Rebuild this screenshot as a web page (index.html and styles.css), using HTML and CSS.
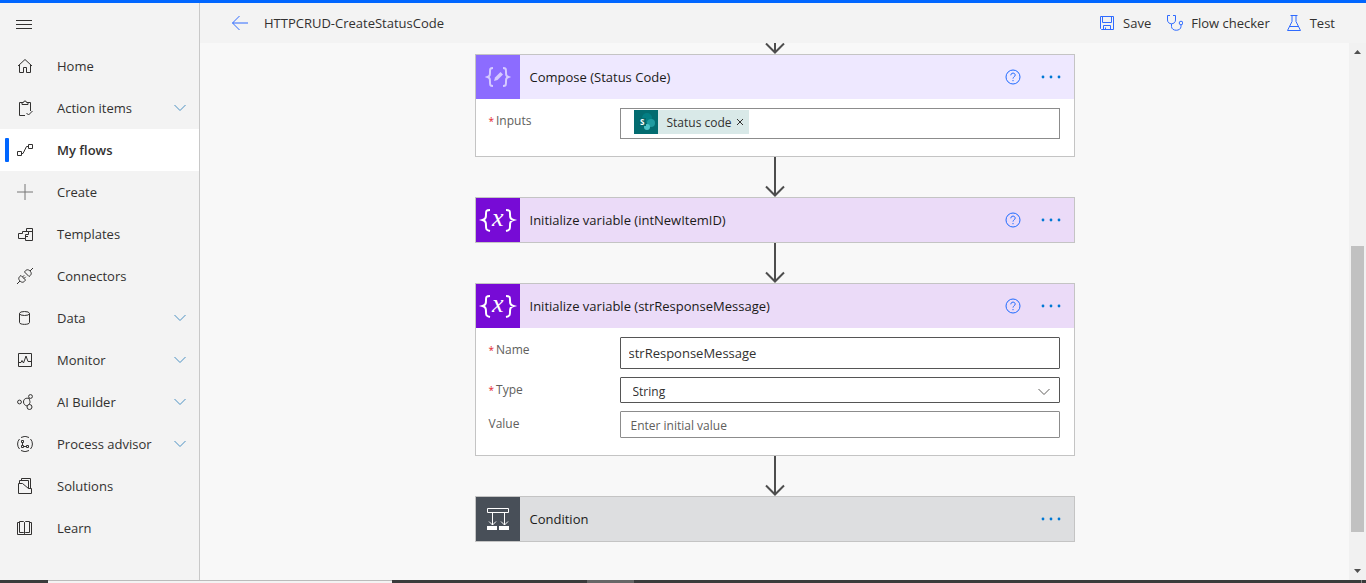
FILE: index.html
```html
<!DOCTYPE html>
<html lang="en">
<head>
    <meta charset="UTF-8">
    <meta name="viewport" content="width=device-width, initial-scale=1.0">
    <title>HTTPCRUD-CreateStatusCode</title>
    <link rel="stylesheet" href="styles.css">
</head>
<body>
    <svg class="defs" aria-hidden="true">
        <symbol id="chevron" viewBox="0 0 12 8"><path d="M.5 1 6 6.500 11.500 1"/></symbol>
        <symbol id="help" viewBox="0 0 16 16"><circle cx="8" cy="8" r="7"/><path d="M5.800 6.300c0-3 4.400-2.800 4.400-.2 0 1.700-2.200 1.700-2.200 3.500M8 11v1.200"/></symbol>
        <symbol id="dots" viewBox="0 0 22 4"><circle cx="3" cy="2" r="1.400"/><circle cx="11" cy="2" r="1.400"/><circle cx="19" cy="2" r="1.400"/></symbol>
        <symbol id="arrow" viewBox="0 0 20 40"><path d="M10 0v38M1 29.500l9 9 9-9"/></symbol>
    </svg>

    <div class="accent"></div>
    <div class="app">
        <nav class="sidebar">
            <button class="nav-item menu" aria-label="Menu">
                <svg class="icon" viewBox="0 0 16 16"><path d="M0 4.500h16M0 8.500h16M0 12.500h16"/></svg>
            </button>
            <a href="#" class="nav-item">
                <svg class="icon" viewBox="0 0 16 16"><path d="M1 8 8 1.500 15 8M2.500 7v7.500h4v-5h3v5h4V7"/></svg>
                <span>Home</span>
            </a>
            <a href="#" class="nav-item">
                <svg class="icon" viewBox="0 0 16 16"><path d="M8 15.500H2.500v-13H5M11 2.500h2.500V11M5 4.500v-2h1.500a1.500 1.500 0 0 1 3 0H11v2zM9.500 13l2 2 4-4"/></svg>
                <span>Action items</span>
                <svg class="chevron"><use href="#chevron"/></svg>
            </a>
            <a href="#" class="nav-item active">
                <svg class="icon" viewBox="0 0 16 16"><path d="M.5 9.500h4v4h-4zM11.500 2.500h4v4h-4zM4.500 11.500H6l3.500-7h2"/></svg>
                <span>My flows</span>
            </a>
            <a href="#" class="nav-item">
                <svg class="icon thin" viewBox="0 0 16 16"><path d="M8 0v16M0 8h16"/></svg>
                <span>Create</span>
            </a>
            <a href="#" class="nav-item">
                <svg class="icon" viewBox="0 0 16 16"><path d="M9.500 5.500v-3h6v12h-7v-2h-7v-5h4v-2h6v3h-3v4M8.500 10.500H11M15.500 5.500h-4"/></svg>
                <span>Templates</span>
            </a>
            <a href="#" class="nav-item">
                <svg class="icon" viewBox="0 0 16 16"><path d="M0 16l3-3M13 3l3-3M3 13c-2-2-1.500-4 1-5.500L8.500 12C7 14.500 5 15 3 13zM7.500 4 12 8.500c2.500-1.500 3-3.500 1-5.500s-4-1.500-5.500 1zM5.500 9l1.700-1.700M7 10.500l1.700-1.700"/></svg>
                <span>Connectors</span>
            </a>
            <a href="#" class="nav-item">
                <svg class="icon" viewBox="0 0 16 16"><ellipse cx="7.500" cy="3.500" rx="5" ry="2"/><path d="M2.500 3.500v9c0 2.500 10 2.500 10 0v-9"/></svg>
                <span>Data</span>
                <svg class="chevron"><use href="#chevron"/></svg>
            </a>
            <a href="#" class="nav-item">
                <svg class="icon" viewBox="0 0 16 16"><path d="M1.500 1.500h13v13h-13zM1.500 10.500H4l1-2 1.500 2.500 2.500-7 2 5.500h3.500"/></svg>
                <span>Monitor</span>
                <svg class="chevron"><use href="#chevron"/></svg>
            </a>
            <a href="#" class="nav-item">
                <svg class="icon" viewBox="0 0 16 16"><circle cx="2.500" cy="8" r="1.900"/><circle cx="13.500" cy="2.500" r="1.900"/><circle cx="12.500" cy="13" r="2.500"/><path d="M12 4.500C9 3.500 6.500 5 6.500 8c0 2 1.500 3.500 3.500 4M12.500 4.500c-.5 2 2 4-1 6"/></svg>
                <span>AI Builder</span>
                <svg class="chevron"><use href="#chevron"/></svg>
            </a>
            <a href="#" class="nav-item">
                <svg class="icon" viewBox="0 0 16 16"><path d="M4 1.500a7.500 7.500 0 0 1 8 0M13.500 3a7.500 7.500 0 0 1 0 10M12 14.500a7.500 7.500 0 0 1-8 0M2.500 13a7.500 7.500 0 0 1 0-10M4.500 4.500h2v2h-2zM4.500 9.500h2v2h-2zM9.500 9.500h2v2h-2zM5.500 6.500v3M6.500 10.500h3"/></svg>
                <span>Process advisor</span>
                <svg class="chevron"><use href="#chevron"/></svg>
            </a>
            <a href="#" class="nav-item">
                <svg class="icon" viewBox="0 0 16 16"><path d="M1.500 15.500v-10h4l6 5h3v5zM2.500 5.500v-3h9v8M4.500 2.500v-2h9v10"/></svg>
                <span>Solutions</span>
            </a>
            <a href="#" class="nav-item">
                <svg class="icon" viewBox="0 0 16 16"><path d="M2.500 1.500h4l1 1 1-1h4v11h-4l-1 1-1-1h-4zM7.500 2.500v11M2.500 2.500h-2v12h14v-12h-2"/></svg>
                <span>Learn</span>
            </a>
        </nav>

        <main class="main">
            <header class="toolbar">
                <button class="back" aria-label="Back">
                    <svg class="icon" viewBox="0 0 16 16"><path d="M7.500 1 .5 8l7 7M.5 8H16"/></svg>
                </button>
                <h1>HTTPCRUD-CreateStatusCode</h1>
                <button class="command">
                    <svg class="icon" viewBox="0 0 16 16"><path d="M1.500 1.500h13v13h-12l-1-1zM3.500 1.500v6h9v-6M4.500 14.500v-4h7v4M6.500 14.500v-2"/></svg>
                    <span>Save</span>
                </button>
                <button class="command">
                    <svg class="icon" viewBox="0 0 16 16"><path d="M3 .5H.5V5C.5 10 8.500 10 8.500 5V.5H6M4.500 9v2.500c0 5 9.500 5 9.500 0V10"/><circle cx="14" cy="8" r="1.800"/></svg>
                    <span>Flow checker</span>
                </button>
                <button class="command">
                    <svg class="icon" viewBox="0 0 16 16"><path d="M4.500.5h7M6 .5v6l-4.500 9h13L10 6.500v-6M3.500 11.500h9"/></svg>
                    <span>Test</span>
                </button>
            </header>

            <div class="workspace">
                <div class="flow">
                    <div class="connector cut"><svg><use href="#arrow"/></svg></div>

                    <section class="card compose">
                        <div class="card-header">
                            <span class="card-icon">
                                <svg viewBox="0 0 44 44">
                                    <path class="soft" d="M17 13c-3 0-3 1-3 4s0 4-2.500 5c2.500 1 2.500 2 2.500 5s0 4 3 4M27 13c3 0 3 1 3 4s0 4 2.500 5c-2.500 1-2.500 2-2.500 5s0 4-3 4"/>
                                    <path class="pencil" d="M18 26l1-3.500 5.500-5.500 2.500 2.500-5.500 5.500z"/>
                                </svg>
                            </span>
                            <h2>Compose (Status Code)</h2>
                            <button class="help" aria-label="Help"><svg><use href="#help"/></svg></button>
                            <button class="more" aria-label="More"><svg><use href="#dots"/></svg></button>
                        </div>
                        <div class="card-body">
                            <label for="inputs"><span class="required">*</span>Inputs</label>
                            <div class="token-field">
                                <span class="token">
                                    <svg viewBox="0 0 24 24">
                                        <circle cx="13" cy="8" r="5" fill="#037e83"/>
                                        <circle cx="17" cy="13" r="4" fill="#1f9ba0"/>
                                        <circle cx="13" cy="17" r="3" fill="#4cc4c9"/>
                                        <path d="M5 8h7v8H5z" fill="#03686c"/>
                                        <text x="6" y="15" class="sp-letter">S</text>
                                    </svg>
                                    <span>Status code</span>
                                    <button aria-label="Remove"><svg viewBox="0 0 8 8"><path d="M1 1l6 6M7 1 1 7"/></svg></button>
                                </span>
                                <input type="text" id="inputs">
                            </div>
                        </div>
                    </section>

                    <div class="connector"><svg><use href="#arrow"/></svg></div>

                    <section class="card variable">
                        <div class="card-header">
                            <span class="card-icon">
                                <svg viewBox="0 0 44 44">
                                    <path class="curly" d="M14 12c-4 0-4 1-4 4s0 5-3.500 6c3.500 1 3.500 3 3.500 6s0 4 4 5M30 12c4 0 4 1 4 4s0 5 3.500 6c-3.500 1-3.500 3-3.500 6s0 4-4 5"/>
                                    <text x="16" y="28" class="var-x">x</text>
                                </svg>
                            </span>
                            <h2>Initialize variable (intNewItemID)</h2>
                            <button class="help" aria-label="Help"><svg><use href="#help"/></svg></button>
                            <button class="more" aria-label="More"><svg><use href="#dots"/></svg></button>
                        </div>
                    </section>

                    <div class="connector"><svg><use href="#arrow"/></svg></div>

                    <section class="card variable">
                        <div class="card-header">
                            <span class="card-icon">
                                <svg viewBox="0 0 44 44">
                                    <path class="curly" d="M14 12c-4 0-4 1-4 4s0 5-3.500 6c3.500 1 3.500 3 3.500 6s0 4 4 5M30 12c4 0 4 1 4 4s0 5 3.500 6c-3.500 1-3.500 3-3.500 6s0 4-4 5"/>
                                    <text x="16" y="28" class="var-x">x</text>
                                </svg>
                            </span>
                            <h2>Initialize variable (strResponseMessage)</h2>
                            <button class="help" aria-label="Help"><svg><use href="#help"/></svg></button>
                            <button class="more" aria-label="More"><svg><use href="#dots"/></svg></button>
                        </div>
                        <div class="card-body">
                            <label for="name"><span class="required">*</span>Name</label>
                            <input type="text" id="name" class="name-input" value="strResponseMessage">
                            <label for="type"><span class="required">*</span>Type</label>
                            <div class="select">
                                <select id="type">
                                    <option>String</option>
                                </select>
                                <svg><use href="#chevron"/></svg>
                            </div>
                            <label for="value">Value</label>
                            <input type="text" id="value" class="value-input" placeholder="Enter initial value">
                        </div>
                    </section>

                    <div class="connector"><svg><use href="#arrow"/></svg></div>

                    <section class="card condition">
                        <div class="card-header">
                            <span class="card-icon">
                                <svg viewBox="0 0 44 44">
                                    <path class="line" d="M11.500 11.500h21v4h-21zM16.500 16v12M28.500 16v12M13 24.500l3.500 3.500 3.500-3.500M25 24.500l3.500 3.500 3.500-3.500"/>
                                    <path class="boxes" d="M11 29h10v4H11zM23 29h10v4H23z"/>
                                </svg>
                            </span>
                            <h2>Condition</h2>
                            <button class="more" aria-label="More"><svg><use href="#dots"/></svg></button>
                        </div>
                    </section>
                </div>

                <div class="scrollbar">
                    <svg viewBox="0 0 7 4"><path d="M0 4 3.500 0 7 4z"/></svg>
                    <div class="track"><div class="thumb"></div></div>
                    <svg viewBox="0 0 7 4"><path d="M0 0l3.500 4L7 0z"/></svg>
                </div>
            </div>
        </main>
    </div>
    <div class="taskbar">
        <div class="start"></div>
        <div class="search"></div>
        <div class="pinned"></div>
        <div class="running"></div>
        <div class="tray"></div>
    </div>
</body>
</html>
```
FILE: styles.css
```css
* {
    box-sizing: border-box;
}

body {
    margin: 0;
    height: 100vh;
    display: flex;
    flex-direction: column;
    overflow: hidden;
    font-family: "Segoe UI", "Open Sans", "Noto Sans", sans-serif;
    font-size: 13px;
    color: #323130;
    background: #f8f8f8;
}

h1, h2 {
    margin: 0;
    font-size: 13px;
    font-weight: normal;
}

button {
    padding: 0;
    border: none;
    background: none;
    font: inherit;
    color: inherit;
    cursor: pointer;
}

input, select {
    font-family: inherit;
    color: #323130;
}

svg {
    display: block;
    fill: none;
    stroke: currentColor;
}

.defs {
    position: absolute;
    width: 0;
    height: 0;
}

.icon {
    width: 16px;
    height: 16px;
    flex: none;
}

.accent {
    height: 3px;
    flex: none;
    background: #0066ff;
}

.app {
    flex: 1;
    min-height: 0;
    display: flex;
}

/* sidebar */
.sidebar {
    width: 200px;
    flex: none;
    background: #f3f3f3;
    border-right: 1px solid #c8c8c8;
}

.nav-item {
    position: relative;
    display: flex;
    align-items: center;
    width: 100%;
    height: 42px;
    padding: 0 13px 0 17px;
    color: #323130;
    text-decoration: none;
}

.nav-item.menu {
    padding-left: 16px;
}

.nav-item span {
    flex: 1;
    margin-left: 24px;
    white-space: nowrap;
}

.nav-item.active {
    background: #fff;
    font-weight: 600;
}

.nav-item.active::before {
    content: "";
    position: absolute;
    left: 5px;
    top: 9px;
    width: 4px;
    height: 24px;
    border-radius: 1px;
    background: #0066ff;
}

.thin {
    color: #777;
}

.chevron {
    width: 12px;
    height: 8px;
    flex: none;
    color: #4a90c2;
}

/* top bar */
.main {
    flex: 1;
    min-width: 0;
    display: flex;
    flex-direction: column;
}

.toolbar {
    display: flex;
    align-items: center;
    gap: 16px;
    height: 40px;
    flex: none;
    padding: 0 31px 0 32px;
    background: #f3f3f3;
}

.toolbar h1 {
    flex: 1;
}

.toolbar .icon {
    color: #2f6bff;
}

.command {
    display: flex;
    align-items: center;
    gap: 8px;
}

/* canvas */
.workspace {
    flex: 1;
    min-height: 0;
    display: flex;
}

.flow {
    flex: 1;
    display: flex;
    flex-direction: column;
    align-items: center;
    overflow: hidden;
}

.connector {
    height: 40px;
    flex: none;
    display: flex;
    align-items: flex-end;
    overflow: hidden;
    color: #4d4d4d;
}

.connector.cut {
    height: 11px;
}

.connector svg {
    width: 20px;
    height: 40px;
    flex: none;
    stroke-width: 2;
}

.card {
    width: 600px;
    max-width: 100%;
    flex: none;
    background: #fff;
    border: 1px solid #c4c4c4;
}

.card-header {
    display: flex;
    align-items: center;
    height: 44px;
    padding-right: 12px;
}

.card-header h2 {
    flex: 1;
    padding-left: 10px;
    color: #1b1a19;
}

.card-icon svg {
    width: 44px;
    height: 44px;
}

.compose .card-header {
    background: #eee8ff;
}

.compose .card-icon {
    background: #8c6cff;
}

.variable .card-header {
    background: #ebdbf8;
}

.variable .card-icon {
    background: #770bd6;
}

.condition .card-header {
    background: #dddee0;
}

.condition .card-icon {
    background: #484f58;
}

.soft {
    stroke: #d6caff;
    stroke-width: 2;
}

.pencil {
    fill: #d6caff;
    stroke: none;
}

.line {
    stroke: #fff;
}

.boxes {
    fill: #fff;
    stroke: none;
}

.curly {
    stroke: #fff;
    stroke-width: 2;
}

.var-x {
    fill: #fff;
    stroke: none;
    font-family: "Liberation Serif", serif;
    font-style: italic;
    font-size: 26px;
}

.help {
    margin-right: 19px;
    color: #1f6bff;
}

.help svg {
    width: 16px;
    height: 16px;
}

.more svg {
    width: 22px;
    height: 4px;
    fill: #0078d4;
    stroke: none;
}

.card-body {
    display: grid;
    grid-template-columns: 131px 1fr;
    row-gap: 8px;
    align-items: start;
    padding: 9px 14px 17px 13px;
    font-size: 12px;
}

.card-body label {
    height: 25px;
    line-height: 25px;
    color: #605e5c;
}

.required {
    margin-right: 2px;
    font-size: 10px;
    color: #e3242b;
}

.token-field {
    display: flex;
    align-items: flex-start;
    height: 31px;
    padding: 1px 0 0 13px;
    border: 1px solid #8c8c8c;
}

.token-field input {
    flex: 1;
    min-width: 0;
    height: 24px;
    border: none;
    outline: none;
    background: none;
}

.token {
    display: flex;
    align-items: center;
    height: 24px;
    padding-right: 5px;
    background: #d9e9e8;
    white-space: nowrap;
}

.token > svg {
    width: 24px;
    height: 24px;
    margin-right: 9px;
    background: #036c70;
    stroke: none;
}

.sp-letter {
    fill: #fff;
    font-size: 8px;
    font-weight: bold;
}

.token button {
    margin-left: 4px;
}

.token button svg {
    width: 8px;
    height: 8px;
}

.name-input, .value-input, .select select {
    width: 100%;
    border: 1px solid #555;
    border-radius: 1px;
    background: #fff;
}

.name-input {
    height: 32px;
    padding: 0 8px;
    font-size: 13px;
}

.value-input {
    height: 27px;
    padding: 1px 10px 0;
    border-color: #8c8c8c;
    font-size: 12px;
}

.value-input::placeholder {
    color: #605e5c;
}

.select {
    position: relative;
}

.select select {
    display: block;
    appearance: none;
    height: 26px;
    padding: 2px 12px 0;
    font-size: 12px;
}

.select svg {
    position: absolute;
    right: 10px;
    top: 11px;
    width: 12px;
    height: 8px;
    color: #605e5c;
    pointer-events: none;
}

/* scrollbar */
.scrollbar {
    width: 17px;
    flex: none;
    display: flex;
    flex-direction: column;
    align-items: center;
    padding: 7px 0;
    background: #f1f1f1;
}

.scrollbar svg {
    width: 7px;
    height: 4px;
    fill: #505050;
    stroke: none;
}

.track {
    flex: 1;
    width: 13px;
    display: flex;
    flex-direction: column;
    justify-content: flex-end;
    padding-bottom: 37px;
}

.thumb {
    height: 56%;
    min-height: 286px;
    background: #c1c1c1;
}

/* taskbar edge */
.taskbar {
    display: flex;
    height: 3px;
    flex: none;
    background: #3a3b3b;
}

.start {
    width: 48px;
}

.search {
    width: 344px;
    background: #f3f3f3;
    border-top: 1px solid #bbb;
}

.pinned {
    width: 195px;
}

.running {
    width: 47px;
    background: #666;
}

.tray {
    flex: 1;
    margin-right: 4px;
    border-right: 1px solid #888;
}
```
